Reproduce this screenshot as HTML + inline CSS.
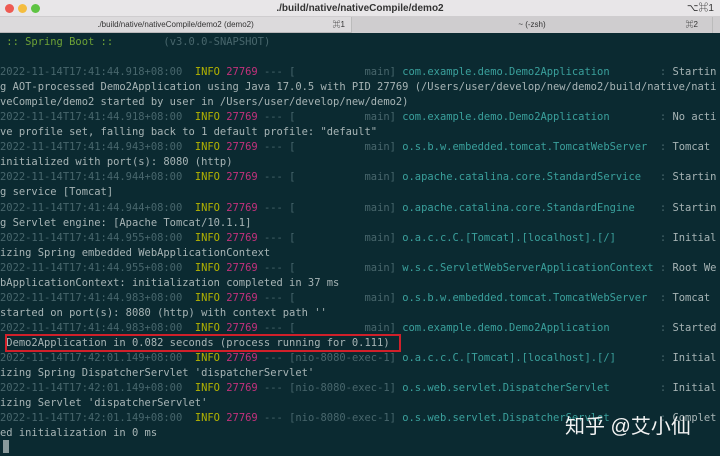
<!DOCTYPE html>
<html><head><meta charset="utf-8"><style>
*{margin:0;padding:0;box-sizing:border-box}
body{width:720px;height:456px;overflow:hidden;background:#0b2a31;font-family:"Liberation Sans","Noto Sans CJK SC",sans-serif;position:relative}
.title{position:absolute;left:0;top:0;width:720px;height:17px;background:#e8e6e8;border-bottom:1px solid #cfcdcf;font-size:10px;font-weight:bold;color:#333;text-align:center;line-height:17px}
.dot{position:absolute;top:4px;width:9px;height:9px;border-radius:50%}
.tabs{position:absolute;left:0;top:17px;width:720px;height:16px;background:#dcdadc;border-bottom:1px solid #b9b7b9;font-size:8px;color:#333;line-height:15px}
.tab{position:absolute;top:0;height:16px;text-align:center}
pre{position:absolute;left:0;top:35px;width:720px;font-family:"DejaVu Sans Mono","Liberation Mono",monospace;font-size:10.45px;line-height:15.04px;color:#a7b4b5;white-space:pre;overflow:hidden}
.d{color:#48666c}.y{color:#b3b300}.m{color:#c4317c}.g{color:#3aa09c}.s{color:#6ea236}
.box{position:absolute;left:5px;top:334px;width:396px;height:18px;border:2px solid #d0202a}
.wm{position:absolute;left:565px;top:410px;font-size:20px;color:#f2f2f2;font-family:"Liberation Sans","Noto Sans CJK SC",sans-serif}
.cur{position:absolute;left:3px;top:440px;width:6px;height:13px;background:#8a9a9c}
</style></head><body>
<div class="title"><div class="dot" style="left:5px;background:#ee5a52"></div><div class="dot" style="left:18px;background:#f4bd3f"></div><div class="dot" style="left:31px;background:#5fc443"></div>./build/native/nativeCompile/demo2<span style="position:absolute;right:6px;font-weight:normal">⌥⌘1</span></div>
<div class="tabs"><div class="tab" style="left:0;width:352px;border-right:1px solid #bbb">./build/native/nativeCompile/demo2 (demo2)<span style="position:absolute;right:6px">⌘1</span></div><div class="tab" style="left:352px;width:360px;background:#cfcdcf">~ (-zsh)<span style="position:absolute;right:14px">⌘2</span></div><div class="tab" style="left:712px;width:8px;border-left:1px solid #bbb;background:#cfcdcf"></div></div>
<pre><span class="s"> :: Spring Boot ::</span>        <span class="d">(v3.0.0-SNAPSHOT)</span>

<span class="d">2022-11-14T17:41:44.918+08:00</span>  <span class="y">INFO</span> <span class="m">27769</span> <span class="d">--- [           main]</span> <span class="g">com.example.demo.Demo2Application       </span> <span class="d">:</span> Startin
g AOT-processed Demo2Application using Java 17.0.5 with PID 27769 (/Users/user/develop/new/demo2/build/native/nati
veCompile/demo2 started by user in /Users/user/develop/new/demo2)
<span class="d">2022-11-14T17:41:44.918+08:00</span>  <span class="y">INFO</span> <span class="m">27769</span> <span class="d">--- [           main]</span> <span class="g">com.example.demo.Demo2Application       </span> <span class="d">:</span> No acti
ve profile set, falling back to 1 default profile: "default"
<span class="d">2022-11-14T17:41:44.943+08:00</span>  <span class="y">INFO</span> <span class="m">27769</span> <span class="d">--- [           main]</span> <span class="g">o.s.b.w.embedded.tomcat.TomcatWebServer </span> <span class="d">:</span> Tomcat
initialized with port(s): 8080 (http)
<span class="d">2022-11-14T17:41:44.944+08:00</span>  <span class="y">INFO</span> <span class="m">27769</span> <span class="d">--- [           main]</span> <span class="g">o.apache.catalina.core.StandardService  </span> <span class="d">:</span> Startin
g service [Tomcat]
<span class="d">2022-11-14T17:41:44.944+08:00</span>  <span class="y">INFO</span> <span class="m">27769</span> <span class="d">--- [           main]</span> <span class="g">o.apache.catalina.core.StandardEngine   </span> <span class="d">:</span> Startin
g Servlet engine: [Apache Tomcat/10.1.1]
<span class="d">2022-11-14T17:41:44.955+08:00</span>  <span class="y">INFO</span> <span class="m">27769</span> <span class="d">--- [           main]</span> <span class="g">o.a.c.c.C.[Tomcat].[localhost].[/]      </span> <span class="d">:</span> Initial
izing Spring embedded WebApplicationContext
<span class="d">2022-11-14T17:41:44.955+08:00</span>  <span class="y">INFO</span> <span class="m">27769</span> <span class="d">--- [           main]</span> <span class="g">w.s.c.ServletWebServerApplicationContext</span> <span class="d">:</span> Root We
bApplicationContext: initialization completed in 37 ms
<span class="d">2022-11-14T17:41:44.983+08:00</span>  <span class="y">INFO</span> <span class="m">27769</span> <span class="d">--- [           main]</span> <span class="g">o.s.b.w.embedded.tomcat.TomcatWebServer </span> <span class="d">:</span> Tomcat
started on port(s): 8080 (http) with context path ''
<span class="d">2022-11-14T17:41:44.983+08:00</span>  <span class="y">INFO</span> <span class="m">27769</span> <span class="d">--- [           main]</span> <span class="g">com.example.demo.Demo2Application       </span> <span class="d">:</span> Started
 Demo2Application in 0.082 seconds (process running for 0.111)
<span class="d">2022-11-14T17:42:01.149+08:00</span>  <span class="y">INFO</span> <span class="m">27769</span> <span class="d">--- [nio-8080-exec-1]</span> <span class="g">o.a.c.c.C.[Tomcat].[localhost].[/]      </span> <span class="d">:</span> Initial
izing Spring DispatcherServlet 'dispatcherServlet'
<span class="d">2022-11-14T17:42:01.149+08:00</span>  <span class="y">INFO</span> <span class="m">27769</span> <span class="d">--- [nio-8080-exec-1]</span> <span class="g">o.s.web.servlet.DispatcherServlet       </span> <span class="d">:</span> Initial
izing Servlet 'dispatcherServlet'
<span class="d">2022-11-14T17:42:01.149+08:00</span>  <span class="y">INFO</span> <span class="m">27769</span> <span class="d">--- [nio-8080-exec-1]</span> <span class="g">o.s.web.servlet.DispatcherServlet       </span> <span class="d">:</span> Complet
ed initialization in 0 ms</pre>
<div class="box"></div>
<div class="cur"></div>
<div class="wm">知乎 @艾小仙</div>
</body></html>
